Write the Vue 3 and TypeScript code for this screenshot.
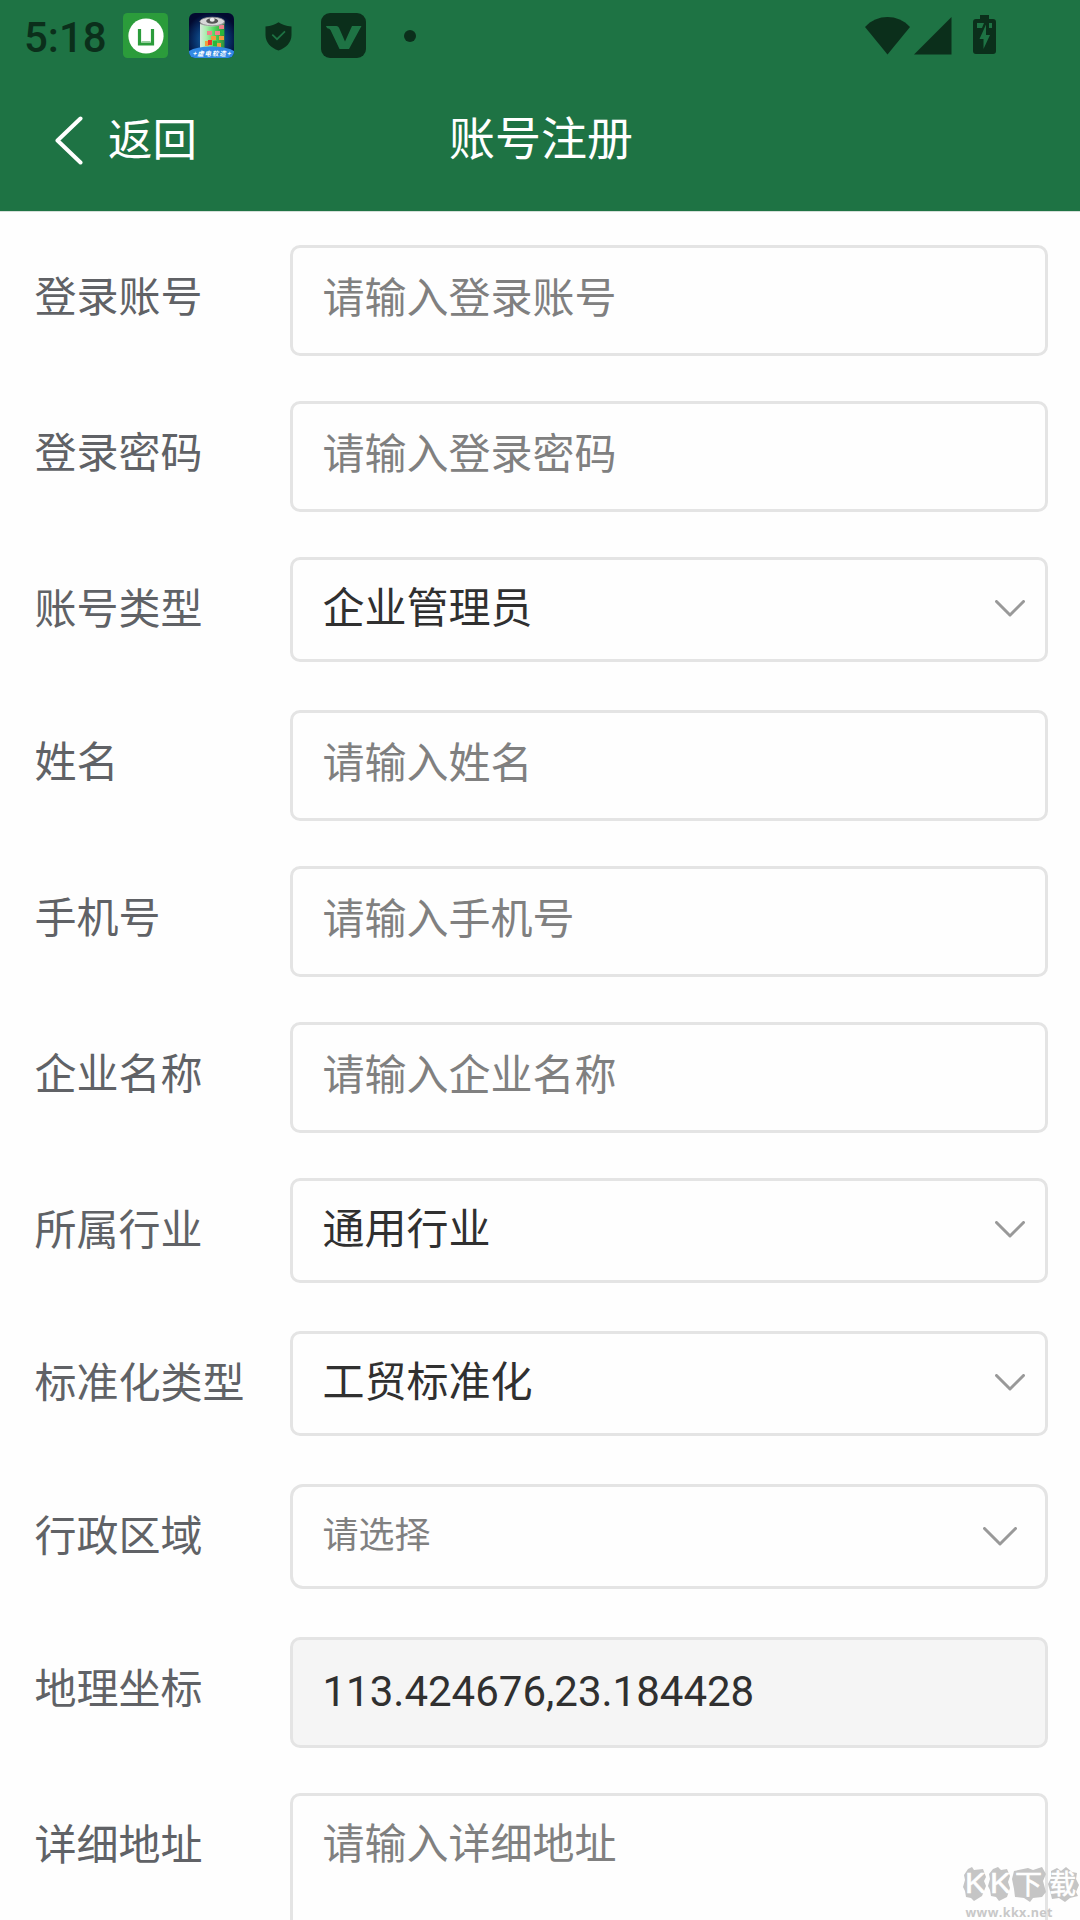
<script setup lang="ts">
interface Field {
  label: string
  kind: 'input' | 'select' | 'region' | 'disabled' | 'area'
  text: string
  placeholder?: boolean
}

const fields: Field[] = [
  { label: '登录账号', kind: 'input', text: '请输入登录账号', placeholder: true },
  { label: '登录密码', kind: 'input', text: '请输入登录密码', placeholder: true },
  { label: '账号类型', kind: 'select', text: '企业管理员' },
  { label: '姓名', kind: 'input', text: '请输入姓名', placeholder: true },
  { label: '手机号', kind: 'input', text: '请输入手机号', placeholder: true },
  { label: '企业名称', kind: 'input', text: '请输入企业名称', placeholder: true },
  { label: '所属行业', kind: 'select', text: '通用行业' },
  { label: '标准化类型', kind: 'select', text: '工贸标准化' },
  { label: '行政区域', kind: 'region', text: '请选择', placeholder: true },
  { label: '地理坐标', kind: 'disabled', text: '113.424676,23.184428' },
  { label: '详细地址', kind: 'area', text: '请输入详细地址', placeholder: true },
]
</script>

<template>
  <div class="page">
    <header class="header">
      <div class="status">
        <span class="time">5:18</span>
        <svg class="app-u" width="45" height="45" viewBox="0 0 45 45">
          <rect width="45" height="45" rx="4.5" fill="#2b9c3b" />
          <circle cx="23" cy="23" r="17.6" fill="#fff" />
          <path d="M16.5 16V31H29.500V16" fill="none" stroke="#2b9c3b" stroke-width="3.2" />
          <path d="M18.500 28.800H27.500" stroke="#8fcb97" stroke-width="1.400" />
        </svg>
        <svg class="app-cell" width="45" height="45" viewBox="0 0 45 45">
          <defs>
            <radialGradient id="night" cx=".5" cy=".6" r=".6">
              <stop offset="0" stop-color="#1b7fc4" />
              <stop offset=".6" stop-color="#08356f" />
              <stop offset="1" stop-color="#020a30" />
            </radialGradient>
            <linearGradient id="metal">
              <stop offset="0" stop-color="#777" />
              <stop offset=".3" stop-color="#eee" />
              <stop offset=".7" stop-color="#bbb" />
              <stop offset="1" stop-color="#777" />
            </linearGradient>
            <linearGradient id="cell">
              <stop offset="0" stop-color="#d9e6dc" />
              <stop offset=".25" stop-color="#a8efad" />
              <stop offset=".6" stop-color="#4ed65a" />
              <stop offset="1" stop-color="#2f8d3a" />
            </linearGradient>
            <clipPath id="tile"><rect width="45" height="45" rx="6" /></clipPath>
          </defs>
          <g clip-path="url(#tile)">
            <rect width="45" height="45" fill="url(#night)" />
            <path d="M11 9H35.500V36H11Z" fill="url(#cell)" />
            <path d="M18 18h5v4h-5zM26 18h5v4h-5zM30 12h5v4h-5z" fill="#f0808a" />
            <path d="M22 23h5v4h-5zM30 23h5v4h-5zM16 28h4v5h-4zM28 30h4v4h-4z" fill="#f39b3c" />
            <path d="M19 27h4v5h-4z" fill="#e8322c" />
            <path d="M24 28h4v5h-4zM31 17h4v5h-4z" fill="#2bb53b" />
            <path d="M11 9V11Q23 16 35.500 11V9Z" fill="url(#metal)" />
            <ellipse cx="23.200" cy="8.500" rx="12.300" ry="4.300" fill="#d8d8d8" stroke="#8b8b8b" stroke-width=".8" />
            <ellipse cx="23.200" cy="8" rx="6" ry="2.800" fill="#555" />
            <ellipse cx="23.200" cy="6.800" rx="2.500" ry="2" fill="#eee" />
            <path d="M0 38Q7 33.500 22.500 33.500T45 38V45H0Z" fill="#3289e4" />
            <text x="22.500" y="42.600" text-anchor="middle" class="cell-text" textLength="38">+虚电软造+</text>
          </g>
        </svg>
        <svg class="shield" width="27" height="29" viewBox="0 0 27 29">
          <path d="M13.500 0.200C10.500 2.500 6 4 0.500 4.600V13C0.500 20.500 6 26 13.500 28.600C21 26 26.500 20.500 26.500 13V4.600C21 4 16.500 2.500 13.500 0.200Z" fill="#0b2f1b" />
          <path d="M7.300 12.700L12 17.200L20 9.400" fill="none" stroke="#1e7344" stroke-width="1.700" />
        </svg>
        <svg class="app-v" width="45" height="45" viewBox="0 0 45 45">
          <rect width="45" height="45" rx="9" fill="#0b2f1b" />
          <path d="M4.800 13H15.500Q17.200 13 18 14.700L24 28.500L31 13H40.500L28 36H18.500L9.500 17Q8.500 15.500 6.300 15.200Z" fill="#1e7344" />
        </svg>
        <span class="dot"></span>
        <svg class="signals" width="131" height="40" viewBox="0 0 131 40">
          <g fill="#0b2f1b">
            <path d="M0 12C12 -1.300 33 -1.300 45 12L22.500 39.500Z" />
            <path d="M86.500 2V39.500H49Z" />
            <path fill-rule="evenodd" d="M115 0H124V4H128Q131 4 131 7V36Q131 39 128 39H111Q108 39 108 36V7Q108 4 111 4H115ZM112 8V13H117L119 8ZM124 8V13H127V8ZM121 9.500L114.500 24H118.500V34L125 20H121Z" />
          </g>
        </svg>
      </div>
      <div class="nav">
        <div class="back">
          <svg width="28" height="50" viewBox="0 0 28 50">
            <path d="M25.500 2.500L2.500 24.500L25.500 46.500" fill="none" stroke="#fff" stroke-width="4" stroke-linecap="round" stroke-linejoin="round" />
          </svg>
          <span>返回</span>
        </div>
        <h1 class="title">账号注册</h1>
      </div>
    </header>

    <main class="form">
      <div v-for="f in fields" :key="f.label" class="row">
        <div class="label">{{ f.label }}</div>
        <div class="control" :class="f.kind">
          <span class="value" :class="{ placeholder: f.placeholder }">{{ f.text }}</span>
          <svg v-if="f.kind === 'select'" class="arrow" width="30" height="17" viewBox="0 0 30 17">
            <path d="M1.500 1.500L15 15L28.500 1.500" />
          </svg>
          <svg v-if="f.kind === 'region'" class="arrow" width="34" height="19" viewBox="0 0 34 19">
            <path d="M1.500 1.500L17 17L32.500 1.500" />
          </svg>
        </div>
      </div>
    </main>

    <svg class="watermark" width="120" height="56" viewBox="0 0 120 56">
      <g fill="#c5c5c5">
        <path d="M8 5L12 3L14 6L23 5L26 13L24 17L26 22L22 32L14 37L11 34L6 33L5 27L3 23L5 16L4 11Z" />
        <path d="M33 5L38 3L41 6L47 5L50 12L48 18L50 24L47 33L39 37L36 33L31 32L30 26L28 22L30 15L29 10Z" />
        <path d="M54 7L68 4L73 6L82 3L86 10L83 17L86 28L82 33L73 34L70 38L64 34L55 33L54 25L52 15Z" />
        <path d="M91 7L97 4L101 7L106 3L112 8L117 9L116 15L119 21L116 28L118 32L110 34L105 38L99 34L92 35L90 27L88 20L91 14Z" />
      </g>
      <g class="mark">
        <text x="5" y="29" textLength="21" lengthAdjust="spacingAndGlyphs">K</text>
        <text x="30" y="29" textLength="21" lengthAdjust="spacingAndGlyphs">K</text>
        <text x="55" y="30" class="han">下</text>
        <text x="89" y="30" class="han">载</text>
      </g>
      <text x="5.500" y="53" class="site" textLength="87">www.kkx.net</text>
    </svg>
  </div>
</template>

<style>
body {
  margin: 0;
  background: #fff;
  overflow: hidden;
}
</style>

<style scoped>
.page {
  position: relative;
  width: 1080px;
  height: 1920px;
  overflow: hidden;
  background: #fefefe;
  font-family: Roboto, 'Noto Sans CJK SC', sans-serif;
}
.header {
  height: 211px;
  background: #1e7344;
  border-bottom: 1px solid #d5dfd9;
  box-sizing: content-box;
}
.status {
  display: flex;
  align-items: flex-start;
  height: 70px;
  padding-left: 24px;
}
.time {
  width: 99px;
  margin-top: 13px;
  font-size: 42px;
  font-weight: 500;
  line-height: 50px;
  color: #0b2f1b;
}
.app-u,
.app-cell,
.app-v {
  margin-top: 13px;
}
.app-cell {
  margin-left: 21px;
}
.cell-text {
  font: bold italic 6.500px 'Noto Sans CJK SC', sans-serif;
  fill: #fff;
}
.shield {
  margin: 22px 0 0 31px;
}
.app-v {
  margin-left: 29px;
}
.dot {
  width: 12px;
  height: 12px;
  margin: 30px 0 0 38px;
  border-radius: 50%;
  background: #0b2f1b;
}
.signals {
  margin: 15px 0 0 449px;
}
.nav {
  display: grid;
  grid-template-columns: 1fr auto 1fr;
  align-items: center;
  height: 141px;
  color: #fff;
}
.back {
  display: flex;
  align-items: center;
  gap: 25px;
  padding-left: 55px;
  font-size: 44.500px;
  line-height: 60px;
}
.title {
  margin: 0;
  padding: 0 0 3px 2px;
  font-size: 46px;
  font-weight: 400;
  line-height: 60px;
}
.form {
  padding: 33px 32px 0 34.500px;
}
.row {
  display: flex;
  align-items: flex-start;
  margin-bottom: 45px;
}
.row:has(.select),
.row:has(.region) {
  margin-bottom: 48px;
}
.label {
  width: 255.500px;
  font-size: 42px;
  line-height: 105px;
  color: #606266;
}
.control {
  box-sizing: border-box;
  flex: 1;
  display: flex;
  align-items: flex-start;
  justify-content: space-between;
  height: 111px;
  padding: 0 20.500px 0 29.500px;
  border: 3px solid #e4e4e4;
  border-radius: 10px;
}
.select,
.region {
  height: 105px;
}
.region {
  padding-right: 28px;
  border-radius: 13px;
}
.disabled {
  background: #f5f5f5;
}
.area {
  height: 260px;
}
.value {
  font-size: 42px;
  line-height: 101px;
  color: #303030;
}
.disabled .value {
  line-height: 103px;
}
.select .value,
.area .value {
  line-height: 97px;
}
.region .value {
  font-size: 36px;
  line-height: 99px;
}
.value.placeholder {
  color: #808080;
}
.arrow {
  margin-top: 40px;
  fill: none;
  stroke: #999;
  stroke-width: 3;
  stroke-linecap: round;
  stroke-linejoin: round;
}
.watermark {
  position: absolute;
  left: 960px;
  top: 1864px;
  overflow: visible;
}
.mark {
  fill: #fff;
  stroke: #fff;
  stroke-width: 0.6;
  font: 400 29px 'Liberation Sans', 'Noto Sans CJK SC', sans-serif;
}
.han {
  font-size: 27px;
}
.site {
  font: bold 12.500px 'Open Sans', sans-serif;
  fill: #c8c8c8;
}
</style>
